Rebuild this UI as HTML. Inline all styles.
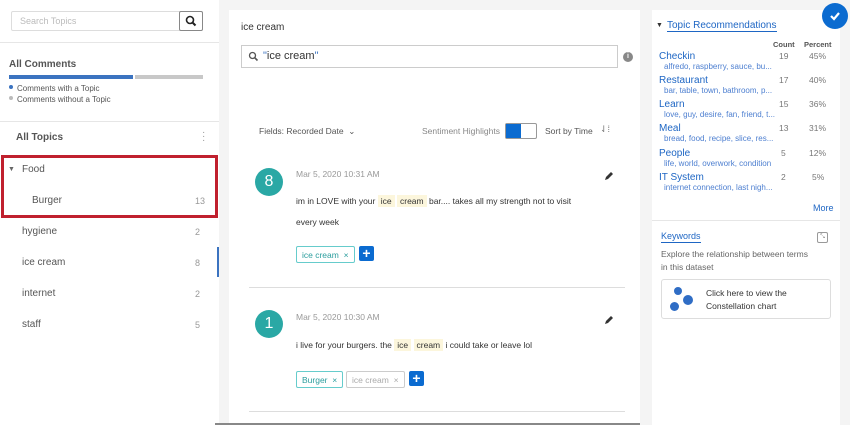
<!DOCTYPE html>
<html><head><meta charset="utf-8"><style>
*{box-sizing:border-box;margin:0;padding:0}
body{width:850px;height:425px;overflow:hidden;background:#f4f4f4;font-family:"Liberation Sans",sans-serif;position:relative;color:#333}
.a{position:absolute}
.t{font-size:10px;color:#555}
.hl{background:#fcf6dc;padding:1px 3px}
.num{color:#999;font-size:9px}
.tag{position:absolute;height:17px;border:1px solid #6cc;border-radius:2px;font-size:8.5px;color:#2a9d9d;padding:3px 5px;white-space:nowrap}
.plus{position:absolute;width:15px;height:15px;background:#0b6bd0;border-radius:2px;color:#fff;font-size:14px;line-height:14px;text-align:center;font-weight:bold}
.av{position:absolute;width:28px;height:28px;border-radius:50%;background:#2aa8a5;color:#fff;font-size:16px;text-align:center;line-height:28px}
.rec{font-size:10px;color:#1e66c4}
.sub{font-size:8px;color:#4d7fd0}
.c{font-size:8.5px;color:#777}
</style></head><body>
<div class="a" style="left:0;top:0;width:219px;height:425px;background:#fff"></div>
<div class="a" style="left:11px;top:11px;width:192px;height:20px;border:1px solid #ddd;border-radius:2px"></div>
<div class="a" style="left:20px;top:16px;font-size:9px;color:#bbb">Search Topics</div>
<div class="a" style="left:179px;top:11px;width:24px;height:20px;border:1px solid #888;border-radius:2px;background:#fff"></div>
<svg class="a" style="left:185px;top:15px" width="12" height="12"><circle cx="5" cy="5" r="3.5" stroke="#222" stroke-width="1.6" fill="none"/><line x1="7.5" y1="7.5" x2="10.5" y2="10.5" stroke="#222" stroke-width="2"/></svg>
<div class="a" style="left:0;top:42px;width:219px;height:1px;background:#e6e6e6"></div>
<div class="a" style="left:9px;top:59px;font-size:10px;font-weight:bold;color:#555">All Comments</div>
<div class="a" style="left:9px;top:75px;width:124px;height:4px;background:#3b73c0"></div>
<div class="a" style="left:135px;top:75px;width:68px;height:4px;background:#c8c8c8"></div>
<div class="a" style="left:9px;top:85px;width:4px;height:4px;border-radius:50%;background:#3b73c0"></div>
<div class="a" style="left:17px;top:84px;font-size:8px;color:#555">Comments with a Topic</div>
<div class="a" style="left:9px;top:96px;width:4px;height:4px;border-radius:50%;background:#bbb"></div>
<div class="a" style="left:17px;top:95px;font-size:8px;color:#555">Comments without a Topic</div>
<div class="a" style="left:0;top:121px;width:219px;height:1px;background:#e6e6e6"></div>
<div class="a" style="left:16px;top:132px;font-size:10px;font-weight:bold;color:#555">All Topics</div>
<div class="a" style="left:202px;top:131px;font-size:10px;color:#999;line-height:4px">·<br>·<br>·</div>
<div class="a" style="left:1px;top:155px;width:217px;height:63px;border:3px solid #c0202e"></div>
<div class="a" style="left:8px;top:166px;font-size:7px;color:#666">▼</div>
<div class="a t" style="left:22px;top:164px">Food</div>
<div class="a t" style="left:32px;top:195px">Burger</div>
<div class="a num" style="left:195px;top:196px">13</div>
<div class="a t" style="left:22px;top:226px">hygiene</div><div class="a num" style="left:195px;top:227px">2</div>
<div class="a t" style="left:22px;top:257px">ice cream</div><div class="a num" style="left:195px;top:258px">8</div>
<div class="a" style="left:217px;top:247px;width:2px;height:30px;background:#3b73c0"></div>
<div class="a t" style="left:22px;top:288px">internet</div><div class="a num" style="left:195px;top:289px">2</div>
<div class="a t" style="left:22px;top:319px">staff</div><div class="a num" style="left:195px;top:320px">5</div>
<div class="a" style="left:229px;top:10px;width:411px;height:415px;background:#fff"></div>
<div class="a" style="left:241px;top:22px;font-size:10px;color:#333">ice cream</div>
<div class="a" style="left:241px;top:45px;width:377px;height:23px;border:1px solid #ccc"></div>
<svg class="a" style="left:248px;top:51px" width="11" height="11"><circle cx="4.5" cy="4.5" r="3" stroke="#555" stroke-width="1.3" fill="none"/><line x1="6.7" y1="6.7" x2="9.5" y2="9.5" stroke="#555" stroke-width="1.6"/></svg>
<div class="a" style="left:263px;top:50px;font-size:11px;color:#333"><span style="color:#3b73c0">"</span>ice cream<span style="color:#3b73c0">"</span></div>
<div class="a" style="left:623px;top:52px;width:10px;height:10px;border-radius:50%;background:#888;color:#fff;font-size:7px;text-align:center;line-height:10px;font-weight:bold">i</div>
<div class="a" style="left:259px;top:126px;font-size:8.5px;color:#555">Fields: Recorded Date &nbsp;⌄</div>
<div class="a" style="left:422px;top:126px;font-size:8.5px;color:#888">Sentiment Highlights</div>
<div class="a" style="left:505px;top:123px;width:32px;height:16px;border:1px solid #999;border-radius:2px;background:#fff"></div>
<div class="a" style="left:506px;top:124px;width:15px;height:14px;background:#0b6bd0"></div>
<div class="a" style="left:545px;top:126px;font-size:8.5px;color:#555">Sort by Time</div>
<div class="a" style="left:600px;top:124px;font-size:9px;color:#777">⇃⁞</div>
<div class="av" style="left:255px;top:168px">8</div>
<div class="a" style="left:296px;top:169px;font-size:8.5px;color:#999">Mar 5, 2020 10:31 AM</div>
<svg class="a" style="left:604px;top:171px" width="10" height="10"><path d="M1 9 L2 6 L7 1 L9 3 L4 8 Z" fill="#333"/></svg>
<div class="a" style="left:296px;top:196px;font-size:8.5px;color:#333">im in LOVE with your <span class="hl">ice</span> <span class="hl">cream</span> bar.... takes all my strength not to visit</div>
<div class="a" style="left:296px;top:217px;font-size:8.5px;color:#333">every week</div>
<div class="tag" style="left:296px;top:246px">ice cream &nbsp;×</div>
<div class="plus" style="left:359px;top:246px">+</div>
<div class="a" style="left:249px;top:287px;width:376px;height:1px;background:#ddd"></div>
<div class="av" style="left:255px;top:310px">1</div>
<div class="a" style="left:296px;top:312px;font-size:8.5px;color:#999">Mar 5, 2020 10:30 AM</div>
<svg class="a" style="left:604px;top:315px" width="10" height="10"><path d="M1 9 L2 6 L7 1 L9 3 L4 8 Z" fill="#333"/></svg>
<div class="a" style="left:296px;top:340px;font-size:8.5px;color:#333">i live for your burgers. the <span class="hl">ice</span> <span class="hl">cream</span> i could take or leave lol</div>
<div class="tag" style="left:296px;top:371px">Burger &nbsp;×</div>
<div class="tag" style="left:346px;top:371px;border-color:#ccc;color:#aaa">ice cream &nbsp;×</div>
<div class="plus" style="left:409px;top:371px">+</div>
<div class="a" style="left:249px;top:411px;width:376px;height:1px;background:#ddd"></div>
<div class="a" style="left:215px;top:423px;width:425px;height:2px;background:#888"></div>
<div class="a" style="left:652px;top:10px;width:188px;height:415px;background:#fff"></div>
<div class="a" style="left:656px;top:22px;font-size:7px;color:#333">▼</div>
<div class="a" style="left:667px;top:20px;font-size:10px;color:#1e66c4;border-bottom:1px solid #1e66c4">Topic Recommendations</div>
<div class="a" style="left:822px;top:3px;width:26px;height:26px;border-radius:50%;background:#0b6bd0"></div>
<svg class="a" style="left:828px;top:9px" width="14" height="14"><path d="M3 7 L6 10 L11 4" stroke="#fff" stroke-width="2.2" fill="none"/></svg>
<div class="a" style="left:773px;top:40px;font-size:7.5px;color:#555;font-weight:bold">Count</div>
<div class="a" style="left:804px;top:40px;font-size:7.5px;color:#555;font-weight:bold">Percent</div>
<div class="a" style="left:659px;top:51px"><div class="rec">Checkin</div><div class="sub" style="margin-left:5px">alfredo, raspberry, sauce, bu...</div></div>
<div class="a c" style="left:779px;top:51px">19</div><div class="a c" style="left:809px;top:51px">45%</div>
<div class="a" style="left:659px;top:75px"><div class="rec">Restaurant</div><div class="sub" style="margin-left:5px">bar, table, town, bathroom, p...</div></div>
<div class="a c" style="left:779px;top:75px">17</div><div class="a c" style="left:809px;top:75px">40%</div>
<div class="a" style="left:659px;top:99px"><div class="rec">Learn</div><div class="sub" style="margin-left:5px">love, guy, desire, fan, friend, t...</div></div>
<div class="a c" style="left:779px;top:99px">15</div><div class="a c" style="left:809px;top:99px">36%</div>
<div class="a" style="left:659px;top:123px"><div class="rec">Meal</div><div class="sub" style="margin-left:5px">bread, food, recipe, slice, res...</div></div>
<div class="a c" style="left:779px;top:123px">13</div><div class="a c" style="left:809px;top:123px">31%</div>
<div class="a" style="left:659px;top:148px"><div class="rec">People</div><div class="sub" style="margin-left:5px">life, world, overwork, condition</div></div>
<div class="a c" style="left:781px;top:148px">5</div><div class="a c" style="left:809px;top:148px">12%</div>
<div class="a" style="left:659px;top:172px"><div class="rec">IT System</div><div class="sub" style="margin-left:5px">internet connection, last nigh...</div></div>
<div class="a c" style="left:781px;top:172px">2</div><div class="a c" style="left:812px;top:172px">5%</div>
<div class="a" style="left:813px;top:203px;font-size:9px;color:#1e66c4">More</div>
<div class="a" style="left:652px;top:220px;width:188px;height:1px;background:#e6e6e6"></div>
<div class="a" style="left:661px;top:231px;font-size:9px;color:#1e66c4;border-bottom:1px solid #1e66c4;padding-bottom:1px">Keywords</div>
<div class="a" style="left:817px;top:232px;width:11px;height:11px;border:1px solid #999;border-radius:2px;font-size:6px;color:#777;line-height:9px;text-align:center">⤡</div>
<div class="a" style="left:661px;top:248px;font-size:8.5px;color:#666;line-height:12.5px">Explore the relationship between terms<br>in this dataset</div>
<div class="a" style="left:661px;top:279px;width:170px;height:40px;border:1px solid #ddd;border-radius:3px"></div>
<div class="a" style="left:674px;top:287px;width:8px;height:8px;border-radius:50%;background:#2f6dc5"></div>
<div class="a" style="left:683px;top:295px;width:10px;height:10px;border-radius:50%;background:#2f6dc5"></div>
<div class="a" style="left:670px;top:302px;width:9px;height:9px;border-radius:50%;background:#2f6dc5"></div>
<div class="a" style="left:706px;top:287px;font-size:8.5px;color:#333;line-height:12.5px">Click here to view the<br>Constellation chart</div>
</body></html>
